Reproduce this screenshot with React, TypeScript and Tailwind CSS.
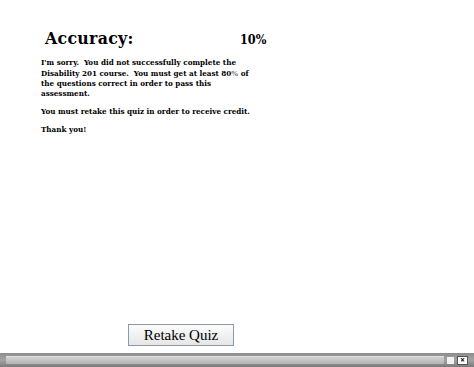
import React from "react";

const slab = { fontFamily: '"DejaVu Serif Condensed", "DejaVu Serif", "Liberation Serif", serif' };

const App: React.FC = () => {
  return (
    <div className="w-[474px] h-[367px] bg-white flex flex-col overflow-hidden">
      <div className="flex-1 flex flex-col">
        <div className="flex items-baseline pt-[25px] pl-[45px]" style={slab}>
          <h1 className="w-[195px] text-[17.5px] font-bold text-black tracking-[0.3px]">Accuracy:</h1>
          <span className="text-[12.5px] font-bold text-black">10%</span>
        </div>
        <div className="pl-[41px] pt-[6px] w-[261px] text-[8px] leading-[10.3px] font-bold text-black" style={slab}>
          <p>
            I'm sorry.&nbsp; You did not successfully complete the Disability 201 course.&nbsp; You must get at least{" "}
            <span className="whitespace-nowrap">
              80<span className="text-gray-500">%</span> of
            </span>{" "}
            the questions correct in order to pass this assessment.
          </p>
          <p className="mt-[8px]">You must retake this quiz in order to receive credit.</p>
          <p className="mt-[7px]">Thank you!</p>
        </div>
        <div className="mt-auto pl-[128px] pb-[7px]">
          <button
            className="w-[106px] h-[22px] border border-[#8a9aa8] bg-gradient-to-b from-[#fcfcfc] to-[#e6e6e6] text-[15px] text-black leading-none"
            style={{ fontFamily: '"Liberation Serif", serif' }}
          >
            Retake Quiz
          </button>
        </div>
      </div>
      <div className="h-[14px] bg-gradient-to-b from-[#8c8c8c] via-[#a4a4a4] to-[#7a7a7a] flex items-center px-[6px] gap-[3px]">
        <div className="flex-1 h-[8px] bg-gradient-to-b from-[#d2d2d2] to-[#b4b4b4] border-t border-[#e0e0e0]" />
        <div className="w-[7px] h-[7px] bg-[#f2f2f2]" />
        <div className="w-[11px] h-[9px] bg-white border border-[#555] flex items-center justify-center text-[8px] font-bold leading-none text-black">
          ×
        </div>
      </div>
    </div>
  );
};

export default App;
